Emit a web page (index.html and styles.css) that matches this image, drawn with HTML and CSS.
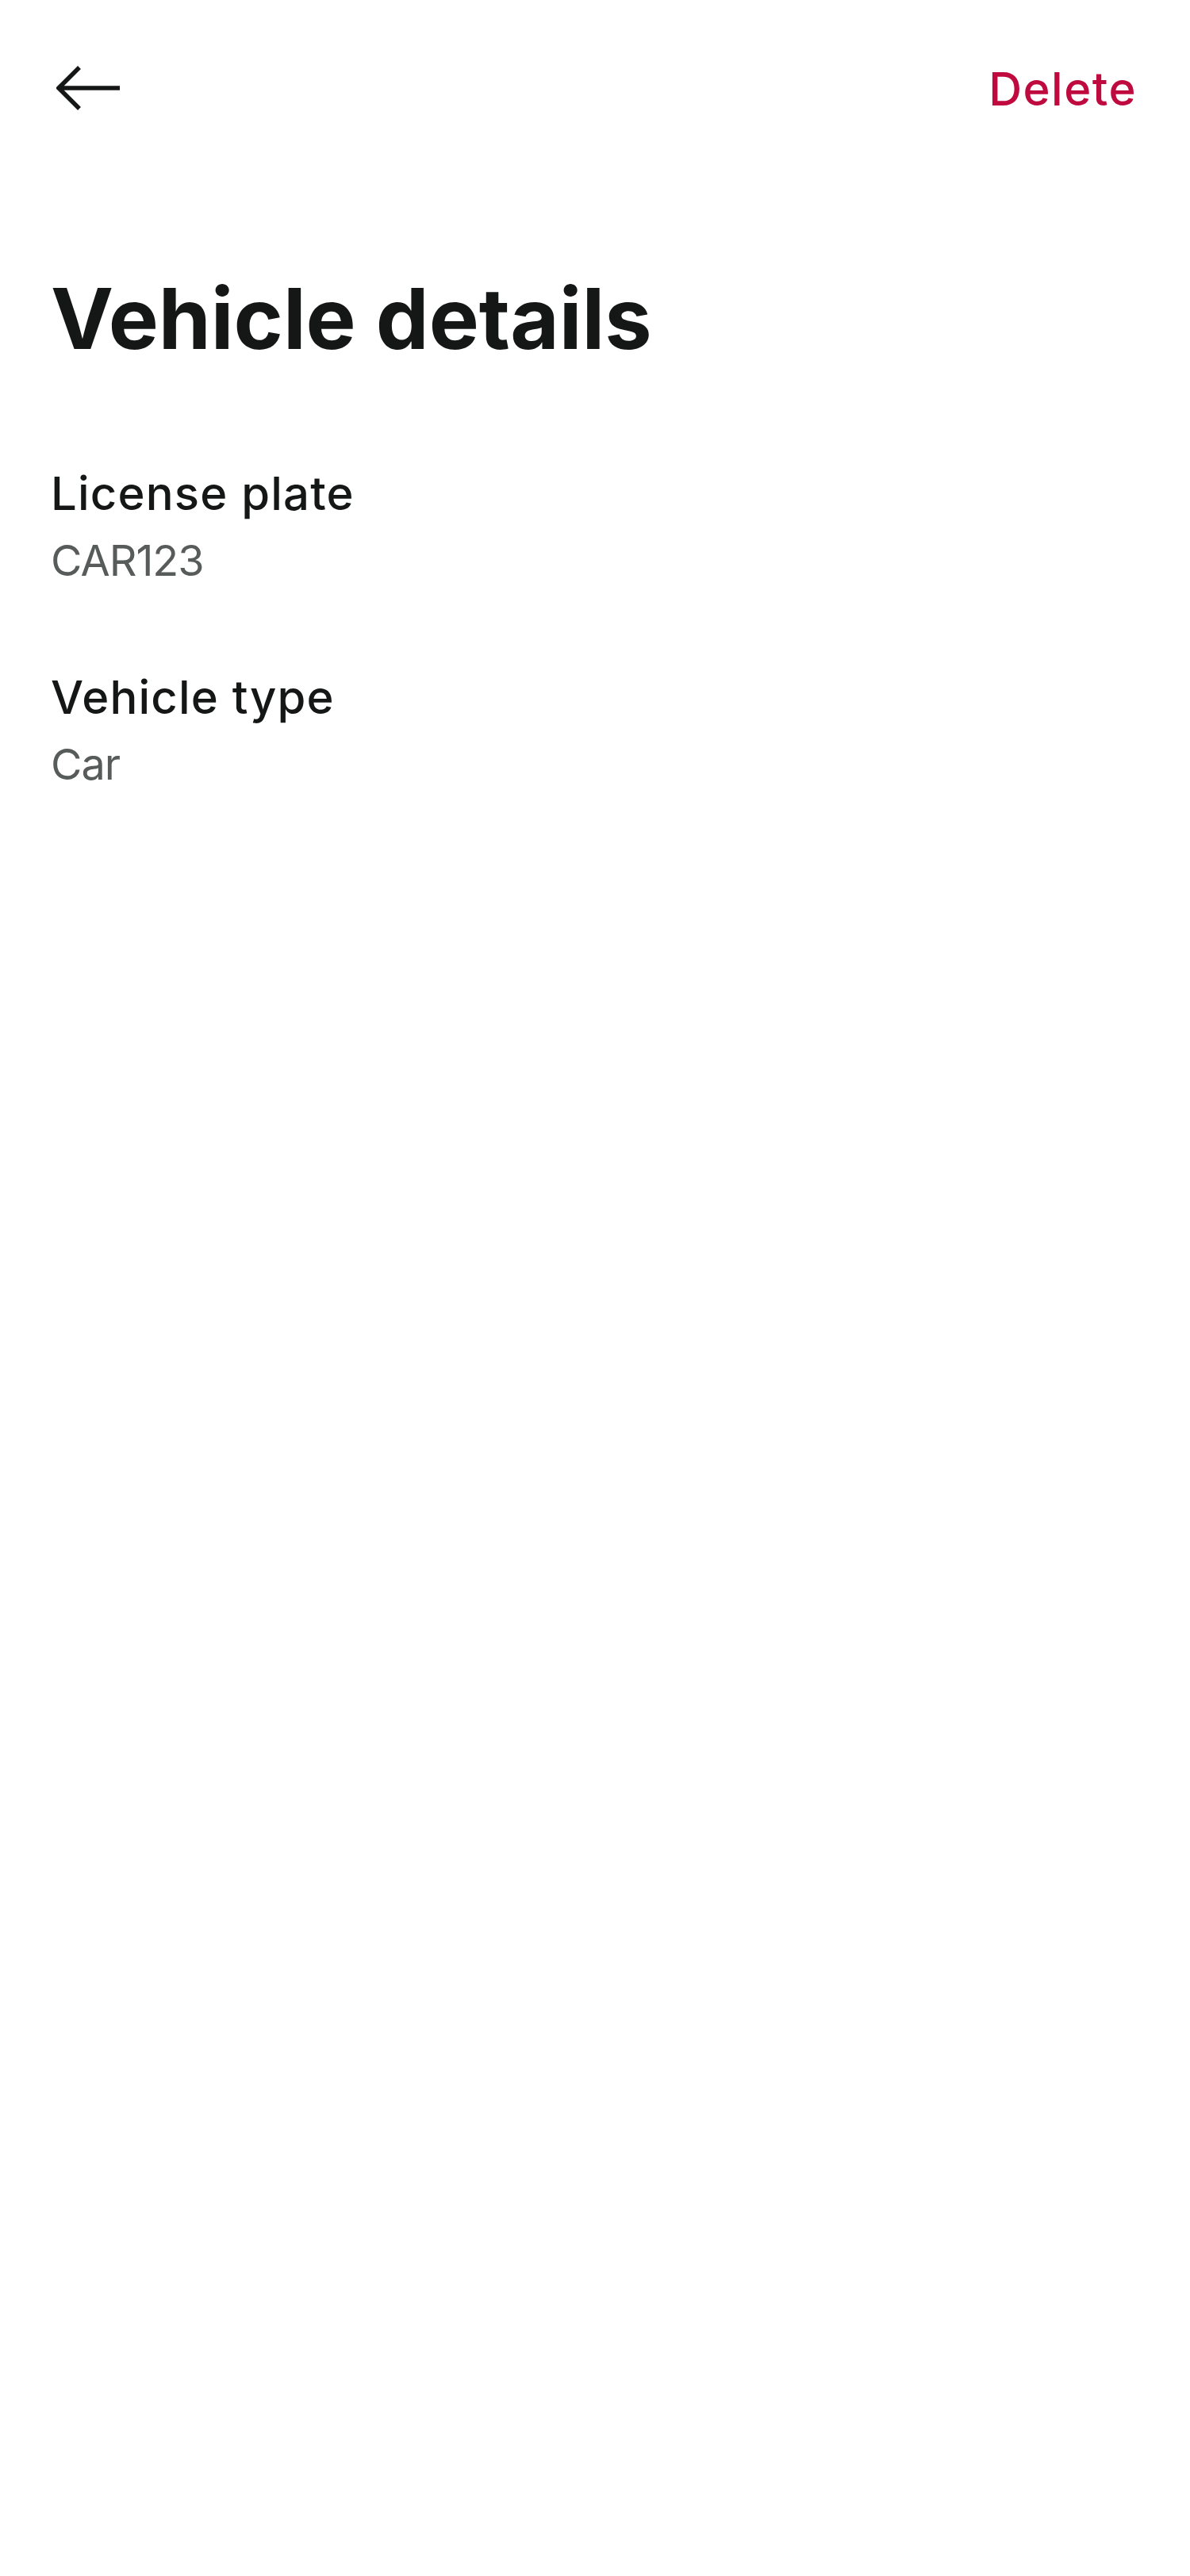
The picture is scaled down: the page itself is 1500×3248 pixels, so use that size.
FILE: index.html
```html
<!DOCTYPE html>
<html lang="en">
<head>
  <meta charset="UTF-8">
  <meta name="viewport" content="width=device-width, initial-scale=1.0">
  <title>Vehicle details</title>
  <link rel="stylesheet" href="styles.css">
</head>
<body>

<div class="screen">
  <!-- 상단 바 -->
  <div class="top-bar">
    <button class="back-button" aria-label="Back">
      <svg width="82" height="58" viewBox="0 0 82 58" fill="none">
        <path d="M3 28 H80 M29 2 L3 28 L29 54" stroke="#151716" stroke-width="5.5" stroke-linejoin="miter"/>
      </svg>
    </button>
    <a class="delete-link" href="#">Delete</a>
  </div>

  <h1 class="page-title">Vehicle details</h1>

  <div class="field">
    <div class="field-label">License plate</div>
    <div class="field-value">CAR123</div>
  </div>

  <div class="field">
    <div class="field-label">Vehicle type</div>
    <div class="field-value">Car</div>
  </div>
</div>

</body>
</html>
```

FILE: styles.css
```css
    body {
      font-family: Inter, "Noto Sans", sans-serif;
      margin: 0;
      background-color: #ffffff;
      color: #151716;
    }

    .screen {
      width: 1500px;
      min-height: 3248px;
      padding: 0 0 0 64px;
      box-sizing: border-box;
    }

    /* 상단 바 */
    .top-bar {
      display: flex;
      justify-content: space-between;
      align-items: center;
      height: 96px;
      padding: 64px 67px 0 7px;
    }

    .back-button {
      display: flex;
      align-items: center;
      padding: 0;
      border: none;
      background: none;
      cursor: pointer;
    }

    .delete-link {
      font-size: 58px;
      font-weight: 500;
      letter-spacing: 1.5px;
      color: #bf0a3f;
      text-decoration: none;
    }

    /* 제목 */
    .page-title {
      margin: 182px 0 0 0;
      font-size: 106px;
      line-height: 120px;
      font-weight: 700;
    }

    /* 항목 */
    .field {
      margin-top: 124px;
    }

    .field + .field {
      margin-top: 100px;
    }

    .field-label {
      font-size: 58px;
      line-height: 72px;
      font-weight: 500;
      letter-spacing: 1.2px;
      color: #151716;
    }

    .field-value {
      margin-top: 13px;
      font-size: 54px;
      line-height: 72px;
      font-weight: 400;
      letter-spacing: -1px;
      color: #575b59;
    }
```
